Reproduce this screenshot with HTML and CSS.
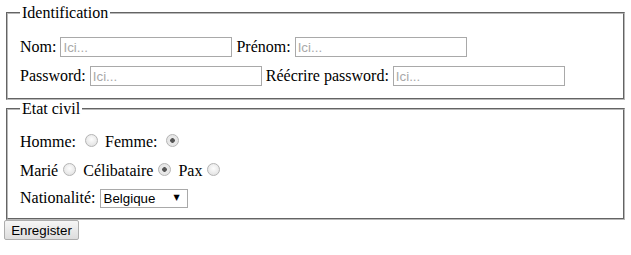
FILE: index.html
```html
<!DOCTYPE html>
<html lang="fr">
<head>
    <meta charset="UTF-8">
    <meta name="viewport" content="width=device-width, initial-scale=1.0">
    <title>Inscription</title>
    <link rel="stylesheet" href="styles.css">
</head>
<body>

    <form id="inscription">
        <!-- Bloc identification -->
        <fieldset class="bloc bloc-ident">
            <legend>Identification</legend>
            <div class="ligne">
                Nom: <input type="text" class="champ" placeholder="Ici..."> Prénom: <input type="text" class="champ" placeholder="Ici...">
            </div>
            <div class="ligne">
                Password: <input type="password" class="champ" placeholder="Ici..."> Réécrire password: <input type="password" class="champ" placeholder="Ici...">
            </div>
        </fieldset>

        <!-- Bloc etat civil -->
        <fieldset class="bloc bloc-civil">
            <legend>Etat civil</legend>
            <div class="ligne">
                Homme: <input type="radio" name="sexe" class="choix"> Femme: <input type="radio" name="sexe" class="choix" checked>
            </div>
            <div class="ligne">
                Marié<input type="radio" name="etat" class="choix"> Célibataire<input type="radio" name="etat" class="choix" checked> Pax<input type="radio" name="etat" class="choix">
            </div>
            <div class="ligne">
                Nationalité: <span class="liste"><select class="pays">
                    <option>Belgique</option>
                    <option>France</option>
                    <option>Pays-Bas</option>
                </select></span>
            </div>
        </fieldset>

        <button type="submit" class="bouton">Enregister</button>
    </form>

</body>
</html>
```

FILE: styles.css
```css
body {
    font-family: "Liberation Serif", "Times New Roman", serif;
    font-size: 16px;
    margin: 4px;
    color: #000;
    background-color: #fff;
}

.bloc {
    margin: 0 2px;
    border: 2px groove #b8b8b8;
    padding: 0 12px 11px;
}

.bloc legend {
    padding: 0 2px;
    line-height: 18px;
}

.bloc-ident {
    padding-top: 15px;
    padding-bottom: 12px;
}

.bloc-civil {
    padding-top: 13px;
    padding-bottom: 10px;
}

.ligne {
    margin-bottom: 9px;
}

.ligne:last-child {
    margin-bottom: 0;
}

.champ {
    font-family: "Liberation Sans", Arial, sans-serif;
    font-size: 13.33px;
    width: 172px;
    height: 20px;
    box-sizing: border-box;
    border: 1px solid #a9a9a9;
    padding: 1px 2px;
    margin: 0;
}

.champ::placeholder {
    color: #a9a9a9;
}

.choix {
    appearance: none;
    -webkit-appearance: none;
    display: inline-block;
    width: 13px;
    height: 13px;
    margin: 3px 3px 0 5px;
    border: 1px solid #b4b4b4;
    border-radius: 50%;
    box-sizing: border-box;
    background: radial-gradient(circle at 50% 40%, #fdfdfd 0, #e6e6e6 70%, #d6d6d6 100%);
}

.choix:checked {
    background: radial-gradient(circle, #555 0, #555 2px, #e8e8e8 2.6px, #e6e6e6 70%, #d6d6d6 100%);
}

.liste {
    position: relative;
    display: inline-block;
}

.liste::after {
    content: "\25BC";
    position: absolute;
    right: 8px;
    top: 4px;
    font-family: "DejaVu Sans", sans-serif;
    font-size: 8px;
    color: #000;
    pointer-events: none;
}

.pays {
    appearance: none;
    -webkit-appearance: none;
    font-family: "Liberation Sans", Arial, sans-serif;
    font-size: 13.33px;
    width: 88px;
    height: 19px;
    box-sizing: border-box;
    border: 1px solid #a9a9a9;
    border-radius: 0;
    background-color: #fff;
    color: #000;
    padding: 0 3px;
    margin: 0;
}

.bouton {
    font-family: "Liberation Sans", Arial, sans-serif;
    font-size: 13.33px;
    width: 75px;
    height: 20px;
    padding: 0 6px;
    margin: 0;
    border: 1px solid #adadad;
    border-radius: 2px;
    background: linear-gradient(#f6f6f6, #dddddd);
    color: #000;
    display: block;
}
```
